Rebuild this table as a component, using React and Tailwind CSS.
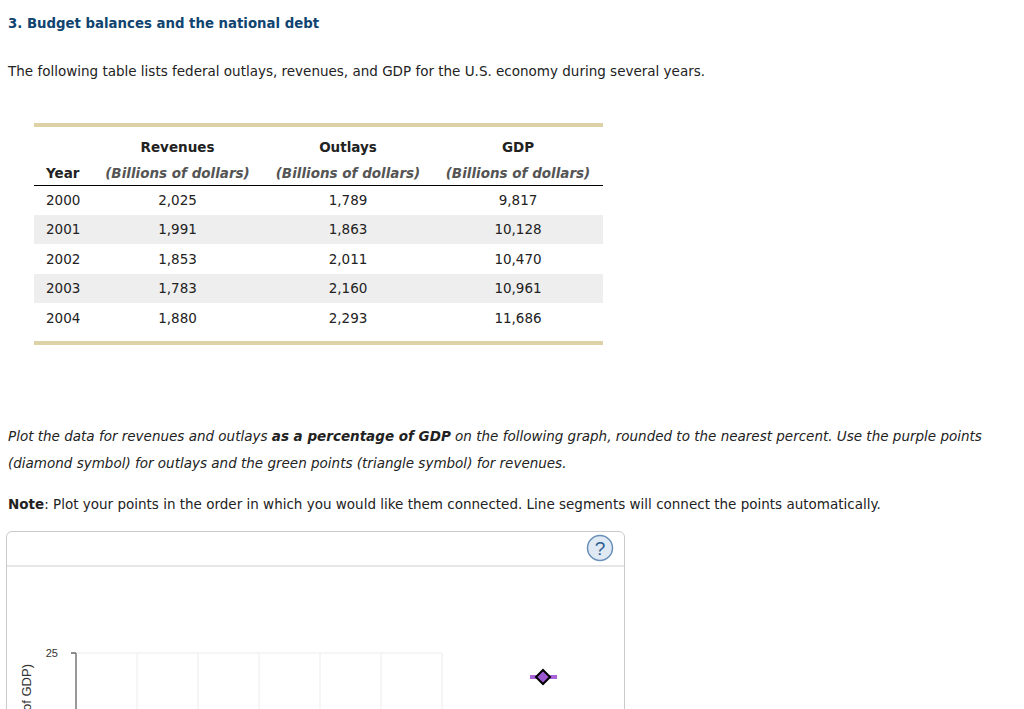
import React from 'react';

const rows = [
  { year: '2000', rev: '2,025', out: '1,789', gdp: '9,817' },
  { year: '2001', rev: '1,991', out: '1,863', gdp: '10,128' },
  { year: '2002', rev: '1,853', out: '2,011', gdp: '10,470' },
  { year: '2003', rev: '1,783', out: '2,160', gdp: '10,961' },
  { year: '2004', rev: '1,880', out: '2,293', gdp: '11,686' },
];

const gridX = [69, 130, 191, 252, 313, 374, 435];

function HelpIcon() {
  return (
    <svg width="28" height="28" viewBox="0 0 28 28">
      <circle cx="14" cy="14" r="12.5" fill="#dfe9f4" stroke="#6a8fb8" strokeWidth="1.5" />
      <text x="14" y="21" textAnchor="middle" fontSize="19" fontFamily="Liberation Sans, Arial, sans-serif" fill="#2d5d8f">?</text>
    </svg>
  );
}

function Graph() {
  return (
    <svg width="617" height="420" className="block">
      {/* grid */}
      <line x1="69" y1="86" x2="435" y2="86" stroke="#ececec" strokeWidth="1" />
      {gridX.slice(1).map((x) => (
        <line key={x} x1={x} y1="86" x2={x} y2="420" stroke="#ececec" strokeWidth="1" />
      ))}
      <line x1="64" y1="86" x2="69" y2="86" stroke="#666" strokeWidth="1.5" />
      <line x1="69" y1="86" x2="69" y2="420" stroke="#777" strokeWidth="1.5" />
      <text x="51" y="90" textAnchor="end" fontSize="11" fontFamily="Liberation Sans, Arial, sans-serif" fill="#333">25</text>
      <text
        transform="translate(24,97) rotate(-90)"
        textAnchor="end"
        fontSize="13"
        fontFamily="Liberation Sans, Arial, sans-serif"
        fill="#333"
      >
        Outlays and Revenues (Percent of GDP)
      </text>
      {/* legend: outlays */}
      <line x1="523" y1="110" x2="550" y2="110" stroke="#a864d8" strokeWidth="4" />
      <polygon points="536,103 543,110 536,117 529,110" fill="#9b59d0" stroke="#000" strokeWidth="2" />
    </svg>
  );
}

export default function App() {
  return (
    <div className="min-h-screen bg-white text-[13.5px] text-[#222]" style={{ fontFamily: '"DejaVu Sans", Verdana, sans-serif' }}>
      <div className="px-2 pt-[15px]">
        <h2 className="font-bold text-[13.3px] leading-[18px] text-[#0f4470]">3. Budget balances and the national debt</h2>
        <p className="mt-[29px] leading-[18px]">
          The following table lists federal outlays, revenues, and GDP for the U.S. economy during several years.
        </p>
      </div>

      <div className="ml-[34px] mt-[43px] w-[569px]">
        <div className="h-[4px] bg-[#dcd1a7]" />
        <table className="w-full border-collapse">
          <colgroup>
            <col className="w-[58px]" />
            <col className="w-[171px]" />
            <col className="w-[170px]" />
            <col className="w-[170px]" />
          </colgroup>
          <thead>
            <tr className="h-[31px] align-bottom">
              <th />
              <th className="pb-[1px] font-bold">Revenues</th>
              <th className="pb-[1px] font-bold">Outlays</th>
              <th className="pb-[1px] font-bold">GDP</th>
            </tr>
            <tr className="h-[27px] border-b-[1.5px] border-black">
              <th className="pl-3 pt-[3px] text-left font-bold">Year</th>
              <th className="pt-[3px] font-bold italic text-[#555]">(Billions of dollars)</th>
              <th className="pt-[3px] font-bold italic text-[#555]">(Billions of dollars)</th>
              <th className="pt-[3px] font-bold italic text-[#555]">(Billions of dollars)</th>
            </tr>
          </thead>
          <tbody>
            {rows.map((r, i) => (
              <tr key={r.year} className={i % 2 === 1 ? 'h-[29.5px] bg-[#eeeeee]' : 'h-[29.5px]'}>
                <td className="pl-3 text-left">{r.year}</td>
                <td className="text-center">{r.rev}</td>
                <td className="text-center">{r.out}</td>
                <td className="text-center">{r.gdp}</td>
              </tr>
            ))}
          </tbody>
        </table>
        <div className="mt-[8px] h-[4px] bg-[#dcd1a7]" />
      </div>

      <div className="px-2 pr-[24px]">
        <p className="mt-[78px] italic leading-[27px]">
          Plot the data for revenues and outlays <b>as a percentage of GDP</b> on the following graph, rounded to the nearest percent. Use the purple points (diamond symbol) for outlays and the green points (triangle symbol) for revenues.
        </p>
        <p className="mt-[18px] leading-[18px]">
          <b>Note</b>: Plot your points in the order in which you would like them connected. Line segments will connect the points automatically.
        </p>
      </div>

      <div className="ml-[6px] mt-[18px] w-[619px] rounded-[6px] border border-[#cacaca]">
        <div className="flex h-[35px] items-center justify-end border-b-2 border-[#e6e6e6] pr-[10px]">
          <HelpIcon />
        </div>
        <Graph />
      </div>
    </div>
  );
}
